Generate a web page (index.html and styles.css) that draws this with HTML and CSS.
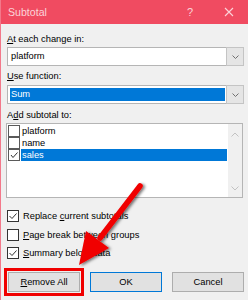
FILE: index.html
```html
<!DOCTYPE html>
<html lang="en">
<head>
    <meta charset="UTF-8">
    <title>Subtotal</title>
    <link rel="stylesheet" href="styles.css">
</head>
<body>
    <div class="dialog">
        <div class="titlebar">
            <span class="title">Subtotal</span>
            <span class="help">?</span>
            <span class="close">
                <svg width="10" height="10" viewBox="0 0 10 10"><path d="M1 1L9 9M9 1L1 9" stroke="#fbd3d9" stroke-width="1.1" fill="none"/></svg>
            </span>
        </div>
        <div class="content">
            <div class="label"><u>A</u>t each change in:</div>
            <div class="select">
                <span class="value">platform</span>
                <span class="drop"><svg width="7" height="4" viewBox="0 0 7 4"><path d="M0.5 0.5L3.5 3.5L6.5 0.5" stroke="#707070" fill="none"/></svg></span>
            </div>

            <div class="label gap2"><u>U</u>se function:</div>
            <div class="select">
                <span class="value selected">Sum</span>
                <span class="drop"><svg width="7" height="4" viewBox="0 0 7 4"><path d="M0.5 0.5L3.5 3.5L6.5 0.5" stroke="#707070" fill="none"/></svg></span>
            </div>

            <div class="label gap3">A<u>d</u>d subtotal to:</div>
            <div class="listbox">
                <div class="items">
                    <div class="item"><span class="box"></span><span class="text">platform</span></div>
                    <div class="item"><span class="box"></span><span class="text">name</span></div>
                    <div class="item"><span class="box">
                        <svg width="10" height="10" viewBox="0 0 10 10"><path d="M2 5L4 7.5L8.5 2.5" stroke="#333" stroke-width="1" fill="none"/></svg>
                    </span><span class="text active">sales</span></div>
                </div>
                <div class="scrollbar">
                    <svg width="8" height="5" viewBox="0 0 8 5"><path d="M0.5 4.5L4 1L7.5 4.5" stroke="#c2c2c2" fill="none"/></svg>
                    <svg width="8" height="5" viewBox="0 0 8 5"><path d="M0.5 0.5L4 4L7.5 0.5" stroke="#c2c2c2" fill="none"/></svg>
                </div>
            </div>

            <div class="options">
                <div class="option"><span class="check">
                    <svg width="10" height="10" viewBox="0 0 10 10"><path d="M1.5 5L4 7.5L8.5 2.5" stroke="#333" stroke-width="1" fill="none"/></svg>
                </span><span>Replace <u>c</u>urrent subtotals</span></div>
                <div class="option"><span class="check"></span><span><u>P</u>age break between groups</span></div>
                <div class="option"><span class="check">
                    <svg width="10" height="10" viewBox="0 0 10 10"><path d="M1.5 5L4 7.5L8.5 2.5" stroke="#333" stroke-width="1" fill="none"/></svg>
                </span><span><u>S</u>ummary below data</span></div>
            </div>

            <div class="buttons">
                <button class="btn marked"><u>R</u>emove All</button>
                <button class="btn default">OK</button>
                <button class="btn">Cancel</button>
            </div>
        </div>

        <svg class="arrow" width="248" height="300" viewBox="0 0 248 300">
            <defs>
                <filter id="shade" x="-20%" y="-20%" width="140%" height="140%">
                    <feDropShadow dx="2" dy="1" stdDeviation="1.6" flood-color="#000" flood-opacity="0.55"/>
                </filter>
            </defs>
            <g filter="url(#shade)">
                <line x1="140" y1="186" x2="100" y2="238" stroke="#f00000" stroke-width="5.5" stroke-linecap="round"/>
                <polygon points="79,265 86,231 109,248" fill="#f00000"/>
            </g>
        </svg>
    </div>
</body>
</html>
```

FILE: styles.css
```css
body {
    margin: 0;
    font-family: "Liberation Sans", Arial, sans-serif;
    font-size: 9.3px;
    color: #000;
}
.dialog {
    position: relative;
    width: 248px;
    height: 300px;
    background-color: #f0f0f0;
    box-sizing: border-box;
    border-left: 1px solid #f3788a;
    overflow: hidden;
}
.titlebar {
    height: 24px;
    margin-left: -1px;
    background-color: #f04b61;
    display: flex;
    align-items: center;
    color: #fbd3d9;
}
.title {
    margin-left: 8px;
    font-size: 10.6px;
    flex: 1;
}
.help {
    font-size: 11px;
    margin-right: 31px;
}
.close {
    display: flex;
    margin-right: 14px;
}
.content {
    padding: 9px 4px 0 6px;
}
.label {
    height: 12px;
    line-height: 12px;
    margin-bottom: 2px;
}
.label.gap2 {
    margin-top: 4px;
    margin-bottom: 3px;
}
.label.gap3 {
    margin-top: 5px;
}
.select {
    height: 19px;
    display: flex;
    background-color: #fff;
    border: 1px solid #b5b5b5;
    box-sizing: border-box;
}
.select .value {
    flex: 1;
    margin: 2px 1px 2px 2px;
    padding-left: 1px;
    line-height: 13px;
}
.select .value.selected {
    background-color: #0078d7;
    color: #fff;
}
.select .drop {
    width: 16px;
    margin: -1px -1px -1px 0;
    background-color: #e5e5e5;
    border: 1px solid #c4c4c4;
    display: flex;
    align-items: center;
    justify-content: center;
}
.listbox {
    height: 75px;
    margin-left: -1px;
    margin-right: 1px;
    display: flex;
    background-color: #fff;
    border: 1px solid #b5b5b5;
    box-sizing: border-box;
}
.items {
    flex: 1;
    padding: 1px 1px 0 1px;
}
.item {
    height: 12px;
    display: flex;
}
.item .box {
    width: 10px;
    height: 10px;
    border: 1px solid #5a5a5a;
    background-color: #fff;
    display: flex;
}
.item .text {
    flex: 1;
    margin-left: 1px;
    padding-left: 1px;
    line-height: 12px;
}
.item .text.active {
    background-color: #0078d7;
    color: #fff;
}
.scrollbar {
    width: 14px;
    background-color: #f0f0f0;
    display: flex;
    flex-direction: column;
    align-items: center;
    justify-content: space-between;
    padding: 8px 0 6px;
}
.options {
    padding-top: 9px;
}
.option {
    height: 18.5px;
    display: flex;
    align-items: center;
}
.option .check {
    width: 10px;
    height: 10px;
    margin-right: 4px;
    border: 1px solid #333;
    background-color: #fff;
    display: flex;
}
.buttons {
    display: flex;
    margin-top: 9px;
    margin-left: 1px;
    gap: 10px;
}
.btn {
    width: 72px;
    height: 20px;
    padding: 0;
    font-family: inherit;
    font-size: 9.3px;
    color: #000;
    background-color: #e1e1e1;
    border: 1px solid #adadad;
}
.btn.default {
    border-color: #0078d7;
}
.btn.marked {
    outline: 3px solid #f00000;
    outline-offset: 1px;
}
.arrow {
    position: absolute;
    left: -1px;
    top: 0;
    pointer-events: none;
}
```
